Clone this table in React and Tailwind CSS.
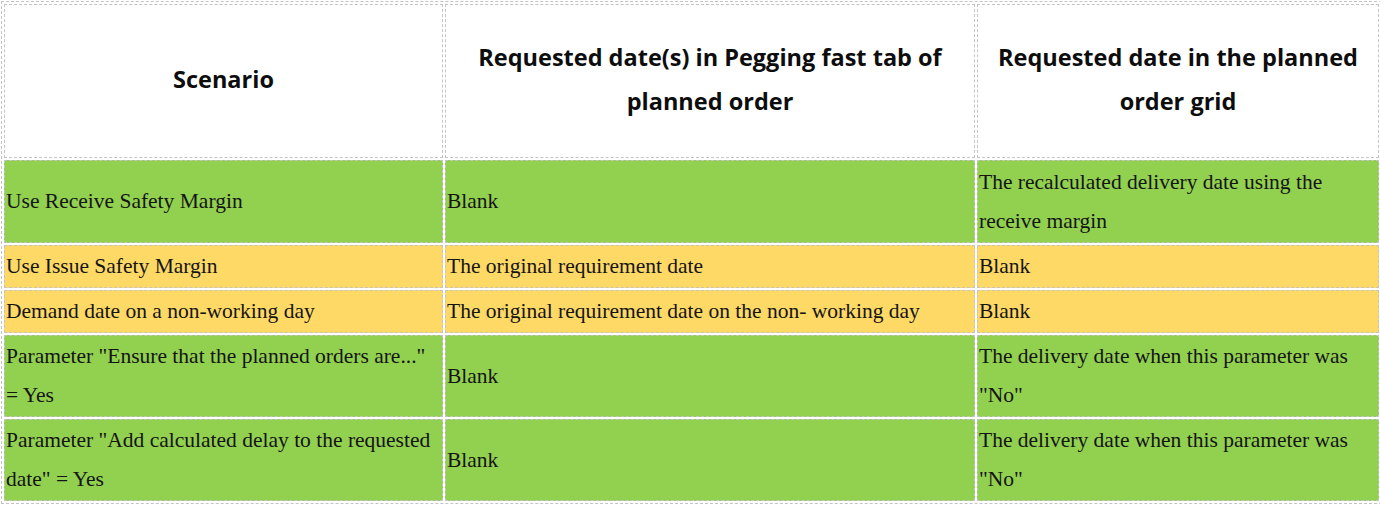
import React from "react";

const serif = "font-['Liberation_Serif','Times_New_Roman',serif]";
const sans = "font-['Open_Sans','Noto_Sans',sans-serif]";

const rows = [
  { bg: "bg-[#92d050]", h: "h-[83px]", c: [["Use Receive Safety Margin"], ["Blank"], ["The recalculated delivery date using the", "receive margin"]] },
  { bg: "bg-[#ffd966]", h: "h-[43px]", c: [["Use Issue Safety Margin"], ["The original requirement date"], ["Blank"]] },
  { bg: "bg-[#ffd966]", h: "h-[43px]", c: [["Demand date on a non-working day"], ["The original requirement date on the non- working day"], ["Blank"]] },
  { bg: "bg-[#92d050]", h: "h-[82px]", c: [["Parameter \"Ensure that the planned orders are...\"", "= Yes"], ["Blank"], ["The delivery date when this parameter was", "\"No\""]] },
  { bg: "bg-[#92d050]", h: "h-[82px]", c: [["Parameter \"Add calculated delay to the requested", "date\" = Yes"], ["Blank"], ["The delivery date when this parameter was", "\"No\""]] },
];

export default function App() {
  return (
    <div className="w-[1380px] h-[505px] bg-white pl-px pt-px">
      <table className="table-fixed w-[1379px] border-separate border-spacing-[2px] border border-dashed border-[#c4c4c4]">
        <colgroup>
          <col className="w-[439px]" />
          <col className="w-[530px]" />
          <col className="w-[402px]" />
        </colgroup>
        <thead>
          <tr>
            {[["Scenario"], ["Requested date(s) in Pegging fast tab of", "planned order"], ["Requested date in the planned", "order grid"]].map((t, i) => (
              <th key={i} className={`h-[154px] pb-[5px] border border-dashed border-[#c4c4c4] bg-white align-middle text-center ${sans} font-bold text-[23.5px] leading-[44px] text-[#0d0d0d]`}>
                {t.map((l, j) => (
                  <div key={j} className="whitespace-nowrap">{l}</div>
                ))}
              </th>
            ))}
          </tr>
        </thead>
        <tbody>
          {rows.map((r, ri) => (
            <tr key={ri}>
              {r.c.map((t, ci) => (
                <td key={ci} className={`${r.h} ${r.bg} border border-dashed border-[#c4c4c4] align-middle px-[1px] ${serif} text-[21.5px] leading-[39px] text-[#141414]`}>
                  {t.map((l, j) => (
                    <div key={j} className="whitespace-nowrap">{l}</div>
                  ))}
                </td>
              ))}
            </tr>
          ))}
        </tbody>
      </table>
    </div>
  );
}
